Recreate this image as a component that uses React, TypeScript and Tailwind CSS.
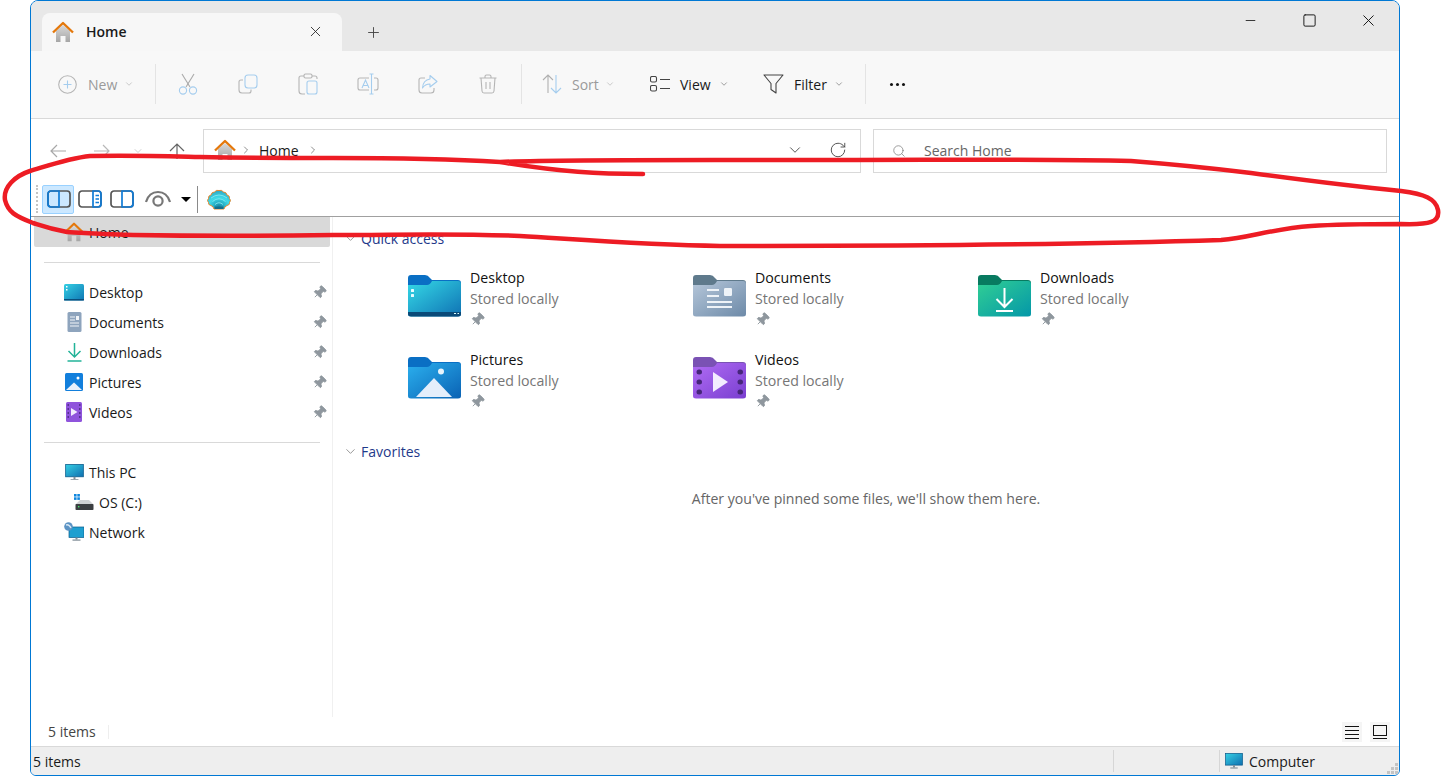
import { ChevronDown, ChevronRight, Plus, Pin, RotateCw, Search, X, Minus, Square } from 'lucide-react';

const font = "font-['Open_Sans','Noto_Sans',sans-serif]";

function HomeIcon({ size = 24 }: { size?: number }) {
  return (
    <svg width={size} height={size} viewBox="0 0 24 24" className="shrink-0">
      <defs>
        <linearGradient id="homeWall" x1="0" y1="0" x2="0" y2="1">
          <stop offset="0" stopColor="#d8d8d8" />
          <stop offset="1" stopColor="#a6a6a6" />
        </linearGradient>
      </defs>
      <path d="M5 11 L12 5 L19 11 V22 H14.5 V16 H9.5 V22 H5 Z" fill="url(#homeWall)" />
      <path d="M2 12.5 L12 3 L22 12.5" fill="none" stroke="#e4780c" strokeWidth="2.4" strokeLinejoin="round" />
    </svg>
  );
}

function Cut() {
  return (
    <svg width="20" height="22" viewBox="0 0 20 22" fill="none" strokeWidth="1.1">
      <path d="M4 1 L12 14" stroke="#a9a9a9" />
      <path d="M16 1 L8 14" stroke="#a9a9a9" />
      <circle cx="5" cy="17.5" r="3.6" stroke="#a5cdee" />
      <circle cx="15" cy="17.5" r="3.6" stroke="#a5cdee" />
    </svg>
  );
}

function CopyIcon() {
  return (
    <svg width="20" height="20" viewBox="0 0 20 20" fill="none" strokeWidth="1.1">
      <path d="M5 6 H3 Q1 6 1 8 V16 Q1 19 4 19 H11 Q13 19 13 17 V15.5" stroke="#b5b5b5" />
      <rect x="7" y="1" width="12" height="13" rx="3" stroke="#a5cdee" />
    </svg>
  );
}

function Paste() {
  return (
    <svg width="20" height="22" viewBox="0 0 20 22" fill="none" strokeWidth="1.1">
      <path d="M6 3 H3 Q1 3 1 5 V18 Q1 21 4 21 H7" stroke="#b5b5b5" />
      <path d="M14 3 H17 Q19 3 19 5 V6" stroke="#b5b5b5" />
      <rect x="6" y="1" width="8" height="4" rx="1.5" stroke="#b5b5b5" />
      <rect x="9" y="8" width="10" height="13" rx="2" stroke="#a5cdee" />
    </svg>
  );
}

function Rename() {
  return (
    <svg width="22" height="22" viewBox="0 0 22 22" fill="none" strokeWidth="1.1">
      <path d="M12 5 H3 Q1 5 1 7 V15 Q1 17 3 17 H12" stroke="#b5b5b5" />
      <path d="M17 5 H19 Q21 5 21 7 V15 Q21 17 19 17 H17" stroke="#b5b5b5" />
      <path d="M5 15 L8.5 7 L12 15 M6.2 12.5 H10.8" stroke="#a5cdee" />
      <path d="M14.5 1 V21 M12.5 1 H16.5 M12.5 21 H16.5" stroke="#a5cdee" />
    </svg>
  );
}

function Share() {
  return (
    <svg width="20" height="20" viewBox="0 0 20 20" fill="none" strokeWidth="1.1">
      <path d="M7 4 H3 Q1 4 1 6 V16 Q1 19 4 19 H13 Q16 19 16 16 V14" stroke="#b5b5b5" />
      <path d="M12 1.5 L19 7.5 L12 13 V10 Q7 10 4.5 14 Q5 6 12 5 Z" stroke="#a5cdee" strokeLinejoin="round" />
    </svg>
  );
}

function Trash() {
  return (
    <svg width="18" height="20" viewBox="0 0 18 20" fill="none" strokeWidth="1.1" stroke="#b5b5b5">
      <path d="M0.5 4 H17.5 M6 4 V2.5 Q6 1 7.5 1 H10.5 Q12 1 12 2.5 V4" />
      <path d="M2 4 L3 17 Q3.2 19 5 19 H13 Q14.8 19 15 17 L16 4" />
      <path d="M7 8 V15 M11 8 V15" />
    </svg>
  );
}

function SortIcon() {
  return (
    <svg width="20" height="20" viewBox="0 0 20 20" fill="none" strokeWidth="1.1">
      <path d="M6 19 V1 M1 6 L6 1 L11 6" stroke="#b0b0b0" />
      <path d="M14 1 V19 M9 14 L14 19 L19 14" stroke="#a5cdee" />
    </svg>
  );
}

function ViewIcon() {
  return (
    <svg width="20" height="16" viewBox="0 0 20 16" fill="none" stroke="#444" strokeWidth="1.1">
      <rect x="0.5" y="0.5" width="6" height="5.5" rx="1.5" />
      <rect x="0.5" y="9.5" width="6" height="5.5" rx="1.5" />
      <path d="M10 3.5 H20 M10 12.5 H20" />
    </svg>
  );
}

function FilterIcon() {
  return (
    <svg width="21" height="20" viewBox="0 0 21 20" fill="none" stroke="#444" strokeWidth="1.1" strokeLinejoin="round">
      <path d="M1 1 H20 L13 9.5 V19 L8 15.5 V9.5 Z" />
    </svg>
  );
}

function Chevron({ className = '' }: { className?: string }) {
  return <ChevronDown size={10} strokeWidth={1.2} className={`shrink-0 ${className}`} />;
}

function CmdIcon({ children }: { children: React.ReactNode }) {
  return <div className="flex h-full w-[60px] items-center justify-center">{children}</div>;
}

function Sep({ className = '' }: { className?: string }) {
  return <div className={`h-[40px] w-px shrink-0 bg-[#e4e4e4] ${className}`} />;
}

function PaneIcon({ left, right, lines }: { left?: boolean; right?: boolean; lines?: boolean }) {
  const blue = '#0f7bd6';
  const gray = '#555555';
  return (
    <svg width="24" height="18" viewBox="0 0 24 18" fill="none" strokeWidth="1.7">
      <rect x="1" y="1" width="22" height="16" rx="3" stroke={gray} />
      {left && <path d="M12 1 H4 Q1 1 1 4 V14 Q1 17 4 17 H12 Z" stroke={blue} />}
      {right && <path d="M15 1 H20 Q23 1 23 4 V14 Q23 17 20 17 H15 Z" stroke={blue} />}
      {lines && <path d="M17.5 5.5 H21 M17.5 9 H21 M17.5 12.5 H21" stroke={blue} strokeWidth="1.3" />}
      {!left && !right && <path d="M12 1 H20 Q23 1 23 4 V14 Q23 17 20 17 H12 Z" stroke={blue} />}
    </svg>
  );
}

function EyeIcon() {
  return (
    <svg width="26" height="18" viewBox="0 0 26 18" fill="none" stroke="#777" strokeWidth="2.2">
      <path d="M1 12 Q4 2 13 2 Q22 2 25 12" />
      <circle cx="13" cy="11" r="4.6" />
    </svg>
  );
}

function ShellIcon() {
  return (
    <svg width="24" height="21" viewBox="0 0 24 21">
      <defs>
        <radialGradient id="shell" cx="0.5" cy="0.85" r="0.9">
          <stop offset="0" stopColor="#168aa6" />
          <stop offset="0.5" stopColor="#3fdbe8" />
          <stop offset="1" stopColor="#2c9dbc" />
        </radialGradient>
      </defs>
      <path
        d="M7 20 Q6.5 17.5 4 16.5 Q1 16 1.5 13.5 Q-0.5 11.5 1.5 9.5 Q1 6.5 4 6 Q4.5 3 7.5 3 Q9.5 0.5 12 1.5 Q14.5 0.5 16.5 3 Q19.5 3 20 6 Q23 6.5 22.5 9.5 Q24.5 11.5 22.5 13.5 Q23 16 20 16.5 Q17.5 17.5 17 20 Z"
        fill="url(#shell)"
        stroke="#e8872c"
        strokeWidth="1"
      />
      <path d="M7.5 20 H16.5 V17.5 H7.5 Z" fill="#136f8d" />
      <path d="M8 15.5 Q12 12 16 15.5 M5.5 12.5 Q12 7 18.5 12.5 M4 9 Q12 3 20 9" fill="none" stroke="#8aeef5" strokeWidth="0.8" />
    </svg>
  );
}

function PinMark() {
  return <Pin size={15} className="mt-px shrink-0 rotate-45 fill-[#8f979e] text-[#8f979e]" strokeWidth={1.4} />;
}

function NavDesktop() {
  return (
    <svg width="20" height="17" viewBox="0 0 20 17">
      <defs>
        <linearGradient id="navDesk" x1="0" y1="0" x2="1" y2="1">
          <stop offset="0" stopColor="#35d0e4" />
          <stop offset="1" stopColor="#0f77b4" />
        </linearGradient>
      </defs>
      <rect x="0" y="0" width="20" height="16.5" rx="1.5" fill="url(#navDesk)" />
      <rect x="0" y="15" width="20" height="1.5" fill="#0a4f7d" />
      <rect x="2" y="2" width="1.5" height="1.5" fill="#fff" />
      <rect x="2" y="5" width="1.5" height="1.5" fill="#fff" />
    </svg>
  );
}

function NavDocs() {
  return (
    <svg width="15" height="20" viewBox="0 0 15 20">
      <rect x="0.5" y="0" width="14" height="20" rx="1.5" fill="#8ea4bd" />
      <path d="M3 5 H8 M3 8 H8 M3 11 H12 M3 14 H12" stroke="#f1f4f8" strokeWidth="1" />
      <rect x="9" y="4" width="3" height="4" fill="#f1f4f8" />
    </svg>
  );
}

function NavDown() {
  return (
    <svg width="15" height="19" viewBox="0 0 15 19" fill="none" stroke="#22b398" strokeWidth="1.5">
      <path d="M7.5 0 V13 M1.5 8 L7.5 14 L13.5 8" />
      <path d="M0.5 18 H14.5" />
    </svg>
  );
}

function NavPics() {
  return (
    <svg width="18" height="18" viewBox="0 0 18 18">
      <rect width="18" height="18" rx="1.5" fill="#127fdc" />
      <circle cx="13" cy="5" r="1.5" fill="#fff" />
      <path d="M1 17 L9 9.5 L17 17 Z" fill="#e8f0fb" />
    </svg>
  );
}

function NavVideos() {
  return (
    <svg width="16" height="20" viewBox="0 0 16 20">
      <rect width="16" height="20" rx="1.5" fill="#8f54dc" />
      <path d="M5 6 L11.5 10 L5 14 Z" fill="#f2ecfd" />
      <path d="M1.5 3 H3 M1.5 7 H3 M1.5 11 H3 M1.5 15 H3 M13 3 H14.5 M13 7 H14.5 M13 11 H14.5 M13 15 H14.5" stroke="#46267a" strokeWidth="1.6" />
    </svg>
  );
}

function Monitor({ w = 19 }: { w?: number }) {
  return (
    <svg width={w} height={w * 0.88} viewBox="0 0 19 17">
      <defs>
        <linearGradient id="monitor" x1="0" y1="0" x2="1" y2="1">
          <stop offset="0" stopColor="#35d0e4" />
          <stop offset="1" stopColor="#0f6fb0" />
        </linearGradient>
      </defs>
      <rect x="0.5" y="0.5" width="18" height="12.5" fill="url(#monitor)" stroke="#0b5c8c" strokeWidth="0.8" />
      <rect x="8.5" y="13" width="2" height="2.5" fill="#7f8c96" />
      <rect x="5.5" y="15.5" width="8" height="1.2" fill="#7f8c96" />
    </svg>
  );
}

function NavDrive() {
  return (
    <svg width="20" height="17" viewBox="0 0 20 17">
      <rect x="0" y="0" width="2.6" height="2.6" fill="#0f86de" />
      <rect x="3.3" y="0" width="2.6" height="2.6" fill="#0f86de" />
      <rect x="0" y="3.3" width="2.6" height="2.6" fill="#0f86de" />
      <rect x="3.3" y="3.3" width="2.6" height="2.6" fill="#0f86de" />
      <path d="M2 10 L6 6 H15 L19 10 Z" fill="#cfd2d4" />
      <rect x="1.5" y="10" width="18" height="6" rx="0.8" fill="#3c3f42" />
      <rect x="4" y="12" width="1.4" height="1.4" fill="#44e06a" />
    </svg>
  );
}

function NavNetwork() {
  return (
    <svg width="20" height="20" viewBox="0 0 20 20">
      <rect x="5" y="5" width="15" height="10.5" fill="#1f9fd0" stroke="#0b5c8c" strokeWidth="0.7" />
      <rect x="11.5" y="15.5" width="2" height="2" fill="#7f8c96" />
      <rect x="8.5" y="17.5" width="8" height="1.2" fill="#7f8c96" />
      <circle cx="4.5" cy="4.5" r="4.3" fill="#5c93c4" />
      <path d="M2 3 Q5 2 7 6" stroke="#d4e6f4" strokeWidth="1.4" fill="none" />
    </svg>
  );
}

function FolderIcon({ tab, from, to, children }: { tab: string; from: string; to: string; children?: React.ReactNode }) {
  const id = `folder-${from.slice(1)}`;
  return (
    <svg width="53" height="42" viewBox="0 0 53 42" className="shrink-0">
      <defs>
        <linearGradient id={id} x1="0" y1="0" x2="1" y2="1">
          <stop offset="0" stopColor={from} />
          <stop offset="1" stopColor={to} />
        </linearGradient>
      </defs>
      <path d="M0 3 Q0 0 3 0 H17 Q20 0 22 3 L24 5 H50 Q53 5 53 8 V12 H0 Z" fill={tab} />
      <path d="M0 10 H19 Q22 10 24 6 H50 Q53 6 53 9 V39 Q53 41.5 50 41.5 H3 Q0 41.5 0 39 Z" fill={`url(#${id})`} />
      {children}
    </svg>
  );
}

const folders = [
  {
    name: 'Desktop',
    icon: (
      <FolderIcon tab="#0a6fc4" from="#35d9e6" to="#0f72b4">
        <path d="M0 37 H53 V39 Q53 41.5 50 41.5 H3 Q0 41.5 0 39 Z" fill="#0a4a78" />
        <rect x="3" y="14" width="3" height="3" rx="0.6" fill="#e8fbff" />
        <rect x="3" y="19" width="3" height="3" rx="0.6" fill="#e8fbff" />
        <path d="M46 38.5 H48 M49.5 38.5 H51" stroke="#dff" strokeWidth="1.2" />
      </FolderIcon>
    ),
  },
  {
    name: 'Documents',
    icon: (
      <FolderIcon tab="#5f7a8c" from="#b6c7da" to="#6d8aa8">
        <path d="M14 15 H26 M14 21 H26 M14 27 H39 M14 32 H39" stroke="#eef3f8" strokeWidth="2" />
        <rect x="31" y="13" width="8" height="8" rx="1.2" fill="#eef3f8" />
      </FolderIcon>
    ),
  },
  {
    name: 'Downloads',
    icon: (
      <FolderIcon tab="#087a60" from="#31cf94" to="#0497a8">
        <path d="M26.5 13 V31 M18.5 24 L26.5 32 L34.5 24 M18 36 H35" stroke="#fff" strokeWidth="2" fill="none" />
      </FolderIcon>
    ),
  },
  {
    name: 'Pictures',
    icon: (
      <FolderIcon tab="#0a6fc4" from="#2bb0ee" to="#0a62b4">
        <circle cx="33" cy="14.5" r="3" fill="#e8f4fc" />
        <path d="M8 40 L26 21 L44 40 Z" fill="#e4eefb" />
      </FolderIcon>
    ),
  },
  {
    name: 'Videos',
    icon: (
      <FolderIcon tab="#7a52b4" from="#b06cf4" to="#7a3fd0">
        <path d="M20 15 L35 25 L20 35 Z" fill="#f3ecff" />
        <path d="M6 15 h0.5 M6 25 h0.5 M6 35 h0.5 M47 15 h0.5 M47 25 h0.5 M47 35 h0.5" stroke="#46267a" strokeWidth="5" strokeLinecap="round" />
      </FolderIcon>
    ),
  },
];

const pinned = [
  { name: 'Desktop', icon: <NavDesktop /> },
  { name: 'Documents', icon: <NavDocs /> },
  { name: 'Downloads', icon: <NavDown /> },
  { name: 'Pictures', icon: <NavPics /> },
  { name: 'Videos', icon: <NavVideos /> },
];

function NavRow({ icon, label, pin }: { icon: React.ReactNode; label: string; pin?: boolean }) {
  return (
    <div className="flex h-[30px] items-center text-[14px] text-[#1a1a1a]">
      <div className="ml-[33px] flex w-[20px] justify-center">{icon}</div>
      <span className="ml-[5px] flex-1">{label}</span>
      {pin && <div className="mr-[5px]"><PinMark /></div>}
    </div>
  );
}

export default function App() {
  return (
    <div className={`relative h-[776px] w-full overflow-hidden bg-white ${font}`}>
      <div className="ml-[30px] flex h-[776px] w-[1370px] flex-col overflow-hidden rounded-t-lg rounded-b-md border border-[#0078d4] bg-white">
        {/* Title bar with tab */}
        <div className="flex h-[50px] shrink-0 items-end bg-[#e8e8e8] pl-[11px]">
          <div className="flex h-[38px] w-[300px] items-center rounded-t-lg bg-[#f7f7f7] pb-[1px] pl-[9px] pr-[19px]">
            <HomeIcon />
            <span className="mb-[1px] ml-[11px] flex-1 text-[14px] font-semibold text-[#1a1a1a]">Home</span>
            <X size={17} strokeWidth={1.2} className="mr-[-1px] text-[#222]" />
          </div>
          <div className="ml-[23px] flex h-[38px] items-center">
            <Plus size={17} strokeWidth={1.3} className="text-[#444]" />
          </div>
          <div className="flex h-[50px] flex-1 items-start justify-end">
            <div className="flex h-[38px] w-[59px] items-center justify-center"><Minus size={15} strokeWidth={1.3} className="text-[#111]" /></div>
            <div className="flex h-[38px] w-[59px] items-center justify-center"><Square size={15} strokeWidth={1.5} className="text-[#111]" /></div>
            <div className="mr-[1px] flex h-[38px] w-[59px] items-center justify-center"><X size={19} strokeWidth={1.2} className="text-[#111]" /></div>
          </div>
        </div>

        {/* Command bar */}
        <div className="flex h-[68px] shrink-0 items-center border-b border-[#d9d9d9] bg-[#f8f8f8] pb-px text-[14px]">
          <div className="ml-[27px] flex h-[20px] w-[19px] items-center justify-center">
            <svg width="19" height="19" viewBox="0 0 19 19" fill="none" strokeWidth="1.1">
              <circle cx="9.5" cy="9.5" r="8.8" stroke="#b5b5b5" />
              <path d="M9.5 5.5 V13.5 M5.5 9.5 H13.5" stroke="#a5cdee" />
            </svg>
          </div>
          <span className="ml-[11px] w-[36px] text-[#9a9a9a]">New</span>
          <Chevron className="text-[#9a9a9a]" />
          <Sep className="ml-[21px]" />
          <div className="flex h-full items-center pl-[2px]">
            <CmdIcon><Cut /></CmdIcon>
            <CmdIcon><CopyIcon /></CmdIcon>
            <CmdIcon><Paste /></CmdIcon>
            <CmdIcon><Rename /></CmdIcon>
            <CmdIcon><Share /></CmdIcon>
            <CmdIcon><Trash /></CmdIcon>
          </div>
          <Sep className="ml-[3px]" />
          <div className="ml-[20px]"><SortIcon /></div>
          <span className="ml-[10px] w-[33px] text-[#9a9a9a]">Sort</span>
          <Chevron className="text-[#9a9a9a]" />
          <div className="ml-[35px]"><ViewIcon /></div>
          <span className="ml-[10px] w-[39px] text-[#1a1a1a]">View</span>
          <Chevron className="text-[#444]" />
          <div className="ml-[34px]"><FilterIcon /></div>
          <span className="ml-[10px] w-[40px] text-[#1a1a1a]">Filter</span>
          <Chevron className="text-[#444]" />
          <Sep className="ml-[21px]" />
          <div className="ml-[24px] flex gap-[3px]">
            <span className="h-[3px] w-[3px] rounded-full bg-[#111]" />
            <span className="h-[3px] w-[3px] rounded-full bg-[#111]" />
            <span className="h-[3px] w-[3px] rounded-full bg-[#111]" />
          </div>
        </div>

        {/* Address row */}
        <div className="flex h-[62px] shrink-0 items-start pt-[10px]">
          <div className="flex h-[44px] w-[172px] shrink-0 items-center pb-[1px] text-[#9a9a9a]">
            <svg width="18" height="16" viewBox="0 0 18 16" fill="none" stroke="#a8a8a8" strokeWidth="1.2" className="ml-[18px]">
              <path d="M17 8 H2 M8 2 L2 8 L8 14" />
            </svg>
            <svg width="18" height="16" viewBox="0 0 18 16" fill="none" stroke="#b8b8b8" strokeWidth="1.2" className="ml-[26px]">
              <path d="M1 8 H16 M10 2 L16 8 L10 14" />
            </svg>
            <ChevronDown size={12} strokeWidth={1.2} className="ml-[21px] text-[#b0b0b0]" />
            <svg width="18" height="18" viewBox="0 0 18 18" fill="none" stroke="#666" strokeWidth="1.2" className="ml-[24px]">
              <path d="M9 17 V2 M2 9 L9 2 L16 9" />
            </svg>
          </div>
          <div className="flex h-[44px] w-[658px] shrink-0 items-center border border-[#d9d9d9] pb-[2px] pl-[9px] pr-[13px] text-[14px] text-[#1a1a1a]">
            <HomeIcon />
            <ChevronRight size={12} strokeWidth={1.2} className="ml-[3px] text-[#444]" />
            <span className="ml-[7px]">Home</span>
            <ChevronRight size={12} strokeWidth={1.2} className="ml-[8px] text-[#444]" />
            <div className="flex-1" />
            <ChevronDown size={18} strokeWidth={1.2} className="mr-[1px] text-[#444]" />
            <RotateCw size={18} strokeWidth={1.2} className="ml-[24px] text-[#444]" />
          </div>
          <div className="ml-[12px] flex h-[44px] w-[514px] shrink-0 items-center border border-[#d9d9d9] pb-[1px] pl-[18px] text-[14px] text-[#666]">
            <Search size={14} strokeWidth={1.2} className="text-[#777]" />
            <span className="ml-[18px]">Search Home</span>
          </div>
        </div>

        {/* Classic Explorer toolbar */}
        <div className="flex h-[36px] shrink-0 items-center border-b border-[#a0a0a0] pl-[5px] pt-[1px]">
          <div className="h-[28px] w-[2px] border-l-2 border-dotted border-[#c4c4c4]" />
          <div className="ml-[4px] flex h-[29px] w-[32px] items-center justify-center rounded-[2px] border border-[#99d1ff] bg-[#cce8ff] pl-[1px]">
            <PaneIcon left />
          </div>
          <div className="ml-[4px] flex w-[24px] justify-center"><PaneIcon right lines /></div>
          <div className="ml-[8px] flex w-[24px] justify-center"><PaneIcon /></div>
          <div className="ml-[11px]"><EyeIcon /></div>
          <div className="ml-[10px] h-0 w-0 border-x-[5px] border-t-[5px] border-x-transparent border-t-black" />
          <div className="ml-[6px] h-[27px] w-px bg-[#8a8a8a]" />
          <div className="ml-[9px]"><ShellIcon /></div>
        </div>

        {/* Body */}
        <div className="flex min-h-0 flex-1">
          <div className="w-[302px] shrink-0 border-r border-[#f0f0f0]">
            <div className="ml-[3px] flex h-[30px] w-[296px] items-center rounded-b-[2px] bg-[#d9d9d9] text-[14px] text-[#1a1a1a]">
              <div className="ml-[30px] flex w-[20px] justify-center"><HomeIcon size={22} /></div>
              <span className="ml-[5px]">Home</span>
            </div>
            <div className="mb-[14px] ml-[13px] mr-[12px] mt-[15px] h-px bg-[#d9d9d9]" />
            {pinned.map((p) => (
              <NavRow key={p.name} icon={p.icon} label={p.name} pin />
            ))}
            <div className="mb-[14px] ml-[13px] mr-[12px] mt-[15px] h-px bg-[#d9d9d9]" />
            <NavRow icon={<Monitor />} label="This PC" />
            <div className="flex h-[30px] items-center text-[14px] text-[#1a1a1a]">
              <div className="ml-[43px] flex w-[20px] justify-center"><NavDrive /></div>
              <span className="ml-[5px]">OS (C:)</span>
            </div>
            <NavRow icon={<NavNetwork />} label="Network" />
          </div>

          <div className="min-w-0 flex-1 pt-[11px]">
            <div className="flex h-[20px] items-center pl-[11px] text-[14px] text-[#1f3a8a]">
              <ChevronDown size={15} strokeWidth={1.2} className="ml-[-1px] text-[#777]" />
              <span className="ml-[3px]">Quick access</span>
            </div>
            <div className="ml-[75px] mt-[19px] grid grid-cols-[285px_285px_285px] gap-y-[22px]">
              {folders.map((f) => (
                <div key={f.name} className="flex h-[60px] items-start">
                  <div className="mt-[8px]">{f.icon}</div>
                  <div className="ml-[9px] text-[14.2px]">
                    <div className="h-[21px] leading-[21px] text-[#111]">{f.name}</div>
                    <div className="h-[21px] leading-[21px] text-[#767676]">Stored locally</div>
                    <div className="flex h-[20px] items-center"><PinMark /></div>
                  </div>
                </div>
              ))}
            </div>
            <div className="mt-[32px] flex h-[20px] items-center pl-[11px] text-[14px] text-[#1f3a8a]">
              <ChevronDown size={15} strokeWidth={1.2} className="ml-[-1px] text-[#777]" />
              <span className="ml-[3px]">Favorites</span>
            </div>
            <div className="mt-[27px] text-center text-[14.1px] text-[#666]">After you've pinned some files, we'll show them here.</div>
          </div>
        </div>

        {/* Explorer status row */}
        <div className="flex h-[29px] shrink-0 items-center pl-[17px] text-[14px] text-[#444]">
          <span className="w-[60px]">5 items</span>
          <div className="h-[14px] w-px bg-[#eeeeee]" />
          <div className="flex-1" />
          <div className="flex h-[20px] w-[20px] items-center justify-center bg-[#f5f5f5]">
            <svg width="14" height="14" viewBox="0 0 14 14" stroke="#111" strokeWidth="1"><path d="M0 1.5 H14 M0 5.5 H14 M0 9.5 H14 M0 13.5 H14" /></svg>
          </div>
          <div className="ml-[8px] mr-[9px] flex h-[20px] w-[20px] items-center justify-center bg-[#f5f5f5]">
            <svg width="14" height="14" viewBox="0 0 14 14" fill="none" stroke="#111" strokeWidth="1"><rect x="0.5" y="0.5" width="13" height="10" /><path d="M0 13.5 H14" /></svg>
          </div>
        </div>

        {/* Classic status bar */}
        <div className="relative flex h-[29px] shrink-0 items-center border-t border-[#d9d9d9] bg-[#eeeeee] pl-[2px] text-[14px] text-[#1a1a1a]">
          <span className="flex-1">5 items</span>
          <div className="h-[22px] w-px bg-[#d6d6d6]" />
          <div className="w-[105px]" />
          <div className="h-[22px] w-px bg-[#d6d6d6]" />
          <div className="ml-[5px] w-[19px]"><Monitor w={18} /></div>
          <span className="ml-[5px] w-[150px] max-w-[150px]">Computer</span>
          <svg width="12" height="12" viewBox="0 0 12 12" fill="#c4c4c4" className="absolute bottom-0 right-0">
            <rect x="8" y="0" width="3" height="3" />
            <rect x="4" y="4" width="3" height="3" />
            <rect x="8" y="4" width="3" height="3" />
            <rect x="0" y="8" width="3" height="3" />
            <rect x="4" y="8" width="3" height="3" />
            <rect x="8" y="8" width="3" height="3" />
          </svg>
        </div>
      </div>

      {/* Red marker scribble drawn over the screenshot */}
      <svg className="pointer-events-none absolute left-0 top-0" width="1442" height="776" viewBox="0 0 1442 776" fill="none">
        <path
          d="M643 174 C600 174 560 172 500 162 C560 159 700 160 850 160 C950 160 1050 159 1131 161 C1170 164 1210 168 1251 173 C1310 181 1360 187 1401 191 C1425 194 1436 199 1438 210 C1440 222 1430 225 1401 224 C1370 224 1340 224 1311 226 C1270 229 1250 238 1221 240 C1100 244 900 246 720 246 C650 245 600 241 520 236 C450 233 400 235 333 235 C270 236 190 236 133 235 C100 234 85 233 67 232 C50 229 45 227 33 223 C15 216 8 212 5 200 C3 187 15 176 30 171 C50 165 70 158 90 156 C130 155 160 156 200 157 C250 158 290 158 333 158 C400 158 450 159 500 162"
          stroke="#ed1c24"
          strokeWidth="4.5"
          strokeLinecap="round"
          strokeLinejoin="round"
        />
      </svg>
    </div>
  );
}
